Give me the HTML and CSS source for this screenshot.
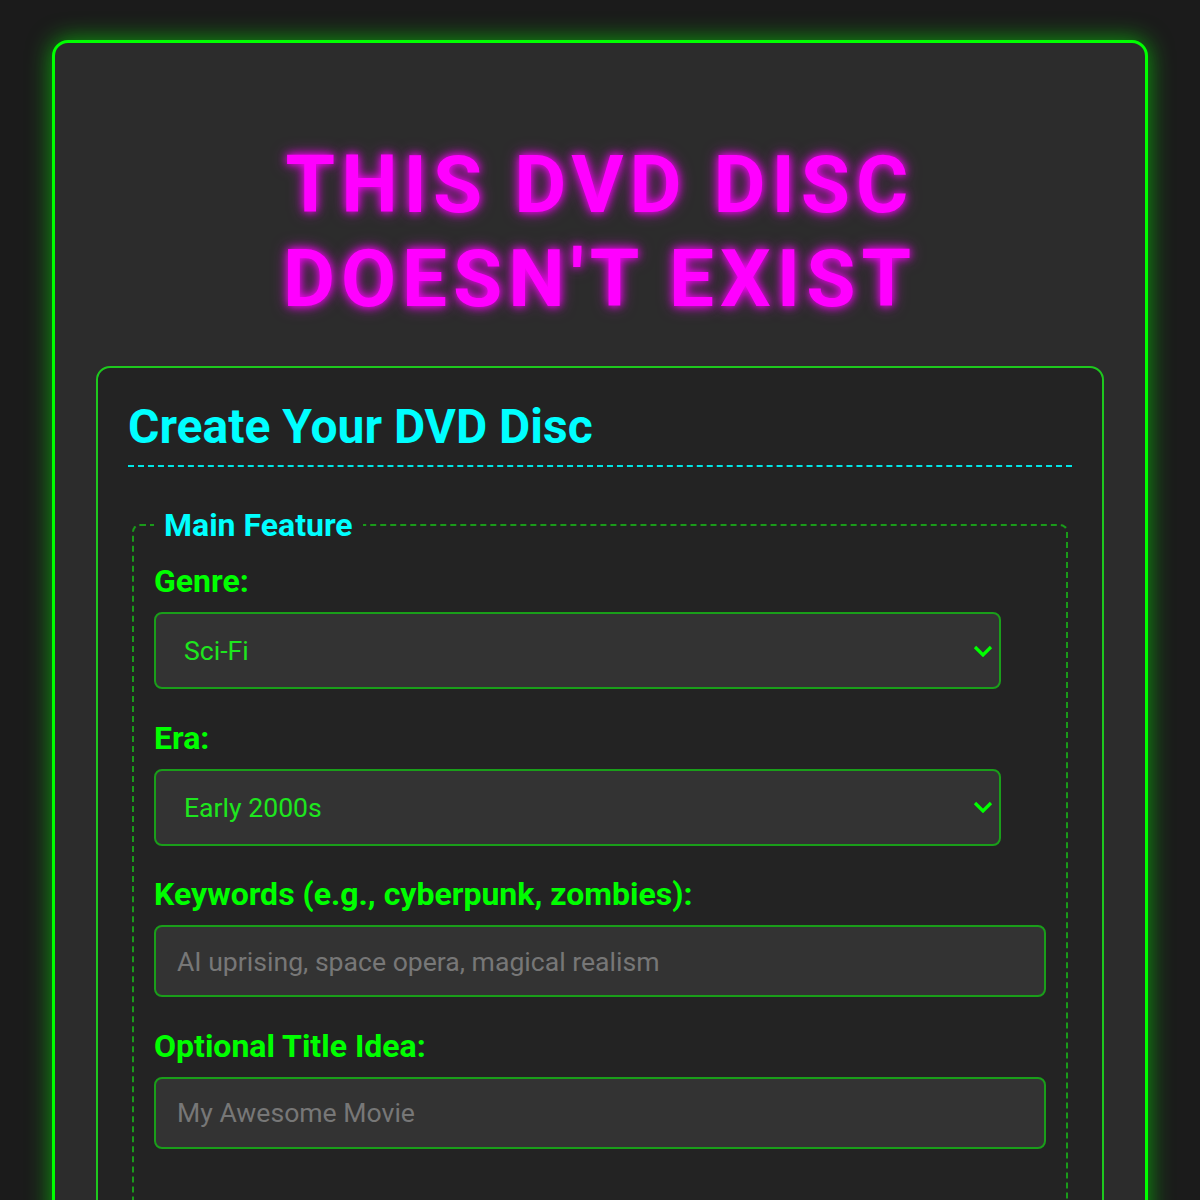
FILE: index.html
```html
<!DOCTYPE html>
<html lang="en">
<head>
    <meta charset="UTF-8">
    <meta name="viewport" content="width=device-width, initial-scale=1.0">
    <title>This DVD Disc Doesn't Exist</title>
    <link rel="stylesheet" href="styles.css">
</head>
<body>
    <div class="container">
        <h1 class="title">This DVD Disc Doesn't Exist</h1>

        <div class="panel">
            <h2>Create Your DVD Disc</h2>

            <fieldset class="feature">
                <legend>Main Feature</legend>

                <div class="form-group">
                    <label for="genre">Genre:</label>
                    <div class="select-wrap">
                        <select id="genre">
                            <option>Sci-Fi</option>
                            <option>Horror</option>
                            <option>Comedy</option>
                            <option>Drama</option>
                            <option>Action</option>
                        </select>
                        <svg class="chevron" viewBox="0 0 20 12" width="20" height="12"><path d="M2 2 L10 10 L18 2" fill="none" stroke="#00ff00" stroke-width="3.2"/></svg>
                    </div>
                </div>

                <div class="form-group">
                    <label for="era">Era:</label>
                    <div class="select-wrap">
                        <select id="era">
                            <option>Early 2000s</option>
                            <option>Late 90s</option>
                            <option>80s</option>
                        </select>
                        <svg class="chevron" viewBox="0 0 20 12" width="20" height="12"><path d="M2 2 L10 10 L18 2" fill="none" stroke="#00ff00" stroke-width="3.2"/></svg>
                    </div>
                </div>

                <div class="form-group">
                    <label for="keywords">Keywords (e.g., cyberpunk, zombies):</label>
                    <input type="text" id="keywords" placeholder="AI uprising, space opera, magical realism">
                </div>

                <div class="form-group">
                    <label for="title">Optional Title Idea:</label>
                    <input type="text" id="title" placeholder="My Awesome Movie">
                </div>
            </fieldset>
        </div>
    </div>
</body>
</html>
```

FILE: styles.css
```css
body {
    font-family: Roboto, "Liberation Sans", Arial, sans-serif;
    margin: 0;
    padding: 0 0 40px;
    background-color: #1b1b1b;
    color: #00ff00;
}

.container {
    box-sizing: border-box;
    width: 1096px;
    margin: 40px auto 0;
    padding: 40px 41px;
    background: #2c2c2c;
    border: 3px solid #00ff00;
    border-radius: 16px;
    box-shadow: 0 0 24px rgba(0, 255, 0, 0.6);
}

.title {
    max-width: 700px;
    margin: 55px auto 40px;
    text-align: center;
    font-size: 80px;
    font-weight: 700;
    text-transform: uppercase;
    letter-spacing: 6px;
    color: #ff00ff;
    text-shadow: 0 0 8px #ff00ff, 0 0 16px rgba(255, 0, 255, 0.6);
}

.panel {
    background: #232323;
    border: 2px solid #1ec81e;
    border-radius: 14px;
    padding: 30px;
}

.panel h2 {
    margin: 0 0 39px;
    padding-bottom: 10px;
    font-size: 48px;
    font-weight: 700;
    color: #00ffff;
    border-bottom: 2px dashed #00e5e5;
}

.feature {
    margin: 0 4px;
    padding: 18px 20px 40px;
    border: 2px dashed #1a9a1a;
    border-radius: 8px;
}

.feature legend {
    padding: 0 10px;
    font-size: 32px;
    font-weight: 700;
    color: #00ffff;
}

.form-group {
    margin-bottom: 29.5px;
}

.form-group label {
    display: block;
    margin-bottom: 12px;
    font-size: 32px;
    font-weight: 700;
    color: #00ff00;
}

.select-wrap {
    position: relative;
    width: 95%;
}

.select-wrap select {
    appearance: none;
    -webkit-appearance: none;
    width: 100%;
    box-sizing: border-box;
    padding: 21px 28px;
    font-family: inherit;
    font-size: 26.6px;
    color: #1ee61e;
    background: #333;
    border: 2px solid #1a9e1a;
    border-radius: 8px;
}

.chevron {
    position: absolute;
    right: 8px;
    top: 50%;
    margin-top: -6px;
    pointer-events: none;
}

.form-group input {
    width: 100%;
    box-sizing: border-box;
    padding: 18.5px 21px;
    font-family: inherit;
    font-size: 26.6px;
    color: #00ff00;
    background: #333;
    border: 2px solid #1a9e1a;
    border-radius: 8px;
}

.form-group input::placeholder {
    color: #777;
}
```
